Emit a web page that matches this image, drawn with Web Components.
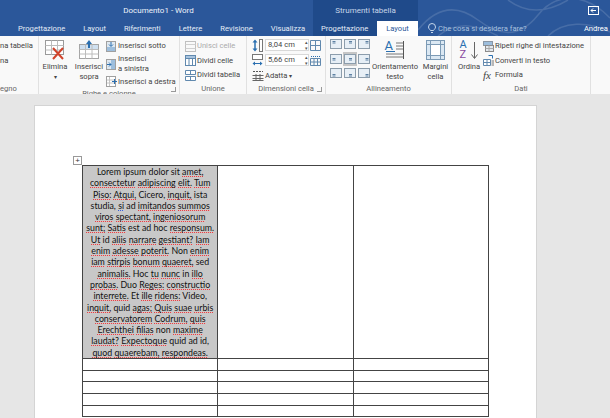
<!DOCTYPE html>
<html lang="it">
<head>
<meta charset="utf-8">
<title>Documento1 - Word</title>
<style>
  html, body { margin: 0; padding: 0; height: 100%; overflow: hidden; background: #e6e6e6; }
</style>
</head>
<body>
<wd-app>
  <wd-header></wd-header>
  <wd-ribbon></wd-ribbon>
  <wd-page>
    <wd-table>Lorem ipsum dolor sit <i>amet,</i><br>
<i>consectetur</i> <i>adipiscing</i> <i>elit.</i> <i>Tum</i><br>
<i>Piso:</i> <i>Atqui,</i> Cicero, <i>inquit,</i> ista<br>
studia, <b>si</b> ad <i>imitandos</i> <i>summos</i><br>
<i>viros</i> <i>spectant,</i> <i>ingeniosorum</i><br>
<i>sunt;</i> <i>Satis</i> est ad hoc <i>responsum.</i><br>
<i>Ut</i> id <i>aliis</i> <i>narrare</i> <i>gestiant?</i> <i>Iam</i><br>
<i>enim</i> <i>adesse</i> <i>poterit.</i> Non <i>enim</i><br>
<i>iam</i> <i>stirpis</i> <i>bonum</i> <i>quaeret,</i> sed<br>
<i>animalis.</i> Hoc <i>tu</i> <i>nunc</i> in <i>illo</i><br>
<i>probas.</i> Duo <i>Reges:</i> <i>constructio</i><br>
<i>interrete.</i> Et <i>ille</i> <i>ridens:</i> Video,<br>
<i>inquit,</i> quid <i>agas;</i> <i>Quis</i> <i>suae</i> <i>urbis</i><br>
<i>conservatorem</i> <i>Codrum,</i> <i>quis</i><br>
<i>Erechthei</i> <i>filias</i> non <i>maxime</i><br>
<i>laudat?</i> <i>Expectoque</i> quid ad id,<br>
<i>quod</i> <i>quaerebam,</i> <i>respondeas.</i></wd-table>
  </wd-page>
</wd-app>

<script>
const icons = {
  del: `<svg width="20" height="20" viewBox="0 0 20 20"><rect x=".5" y=".5" width="18" height="14" fill="#fff" stroke="#9a9a9a"/><path d="M.5 5.500h18M.5 10h18M6.500.5v14M12.500.5v14" stroke="#bcbcbc" fill="none"/><path d="M8 8l10 11M18 8L8 19" stroke="#d0432b" stroke-width="2"/></svg>`,
  above: `<svg width="20" height="19" viewBox="0 0 20 19"><rect x=".5" y="4.500" width="19" height="14" fill="#fff" stroke="#a5a5a5"/><rect x="1" y="5" width="18" height="4" fill="#cfe0f0"/><path d="M.5 9.500h19M.5 14h19M6.500 4.500v14M13 4.500v14" stroke="#bcbcbc" fill="none"/><path d="M10 8V3" stroke="#2a6fb0" stroke-width="2"/><path d="M7 4l3-4 3 4z" fill="#2a6fb0"/></svg>`,
  below: `<svg width="10" height="11" viewBox="0 0 10 11"><rect x=".5" y=".5" width="9" height="10" fill="#dfe8f0" stroke="#a0a0a0"/><rect x="1" y="6" width="8" height="4" fill="#9dbedd"/><path d="M5 1v4M3 3.500l2 2 2-2" stroke="#2a6fb0" fill="none"/></svg>`,
  left: `<svg width="10" height="11" viewBox="0 0 10 11"><rect x=".5" y=".5" width="9" height="10" fill="#dfe8f0" stroke="#a0a0a0"/><rect x="5" y="1" width="4" height="9" fill="#9dbedd"/><path d="M1 5.500h4M3 3.500l2 2-2 2" stroke="#2a6fb0" fill="none"/></svg>`,
  right: `<svg width="11" height="11" viewBox="0 0 11 11"><rect x=".5" y=".5" width="9" height="10" fill="#fff" stroke="#a0a0a0"/><path d="M3.500 1v9M1 4h8M1 7h8" stroke="#c4c4c4"/><path d="M6 5.500h5M8.500 3v5" stroke="#2a6fb0"/></svg>`,
  merge: `<svg width="11" height="11" viewBox="0 0 11 11"><rect x=".5" y=".5" width="10" height="10" fill="none" stroke="#c0c0c0"/><path d="M.5 3.500h10M.5 7.500h10" stroke="#d0d0d0"/></svg>`,
  split: `<svg width="11" height="11" viewBox="0 0 11 11"><rect x=".5" y=".5" width="10" height="10" fill="#fff" stroke="#6189ae"/><rect x="1" y="1" width="9" height="2.500" fill="#a9c4de"/><path d="M.5 3.500h10M4 3.500v7M7.500 3.500v7" stroke="#6189ae"/></svg>`,
  splitt: `<svg width="11" height="11" viewBox="0 0 11 11"><path d="M.5 4.500v-4h10v4zM.5 6.500h10v4h-10zM5.500.5v4M5.500 6.500v4" fill="#fff" stroke="#6189ae"/></svg>`,
  height: `<svg width="11" height="13" viewBox="0 0 11 13"><path d="M3 2v9" stroke="#2a6fb0" stroke-width="1.500"/><path d="M.5 3.500L3 .5l2.500 3zM.5 9.500L3 12.500l2.500-3z" fill="#2a6fb0"/><rect x="7.500" y=".5" width="3" height="12" fill="#fff" stroke="#777"/></svg>`,
  width: `<svg width="11" height="12" viewBox="0 0 11 12"><rect x=".5" y=".5" width="10" height="5" fill="#fff" stroke="#777"/><path d="M2 9.500h7" stroke="#2a6fb0"/><path d="M3 7.500L.5 9.500 3 11.500zM8 7.500l2.500 2L8 11.500z" fill="#2a6fb0"/></svg>`,
  fit: `<svg width="12" height="12" viewBox="0 0 12 12"><path d="M1 2.500h10" stroke="#555" stroke-dasharray="2 1"/><path d="M.5 6.500h11M.5 9.500h11M.5 11.500h11M4 5v7M8 5v7" fill="none" stroke="#666"/></svg>`,
  rows: `<svg width="11" height="11" viewBox="0 0 11 11"><path d="M.5.5h10v10H.5zM.5 5.500h10M5.500.5v10" fill="none" stroke="#6189ae"/></svg>`,
  cols: `<svg width="11" height="11" viewBox="0 0 11 11"><path d="M.5 3.500h10v7H.5zM.5 7h10M4 3.500v7M7.500 3.500v7" fill="none" stroke="#6189ae"/><path d="M1 1.500h9" stroke="#2a6fb0" stroke-dasharray="1 1"/></svg>`,
  margins: `<svg width="19" height="20" viewBox="0 0 19 20"><rect x=".5" y=".5" width="18" height="19" fill="#dbe8f3" stroke="#7c9ab5"/><rect x="4.500" y="4.500" width="10" height="11" fill="#fff" stroke="#7c9ab5"/><path d="M4.500.5v19M14.500.5v19M.5 4.500h18M.5 15.500h18" stroke="#7c9ab5" fill="none"/></svg>`,
  sort: `<svg width="19" height="22" viewBox="0 0 19 22"><path d="M14.500 2v16M11.500 14.500l3 4 3-4" fill="none" stroke="#666"/></svg>`,
  repeat: `<svg width="11" height="11" viewBox="0 0 11 11"><rect x=".5" y=".5" width="9" height="4" fill="#9dbedd" stroke="#8a97a5"/><rect x="2.500" y="4.500" width="8" height="6" fill="#e3e9ef" stroke="#8a8a8a"/><path d="M2.500 7.500h8M6 4.500v6" stroke="#aaa"/></svg>`,
  convert: `<svg width="11" height="11" viewBox="0 0 11 11"><path d="M.5 4.500h7v6h-7zM.5 7.500h7M4 4.500v6" fill="#fff" stroke="#6189ae"/><path d="M5.500.5h4v3" fill="none" stroke="#2a6fb0"/><path d="M8.500 6h2.500M8.500 8h2.500M8.500 10h2.500" stroke="#777"/></svg>`
};

function alignIcon(col, row) {
  // box with a few text lines placed by cell alignment
  const x = 2.5 + col * 2.5;
  const y = 2.500 + row * 2;
  return `<svg width="12" height="10" viewBox="0 0 12 10"><rect x=".5" y=".5" width="11" height="9" fill="#e7eff6" stroke="#8c9dac"/><path d="M${x} ${y}h3M${x} ${y + 1.500}h3" stroke="#5d80a2"/></svg>`;
}

class WdApp extends HTMLElement {
  constructor() {
    super();
    this.attachShadow({ mode: 'open' }).innerHTML = `
    <style>
      :host {
        display: flex;
        flex-direction: column;
        width: 610px;
        height: 418px;
        overflow: hidden;
        font-family: Roboto, "Liberation Sans", sans-serif;
        font-size: 7.600px;
        color: #444;
      }
    </style>
    <slot></slot>`;
  }
}

class WdHeader extends HTMLElement {
  constructor() {
    super();
    this.attachShadow({ mode: 'open' }).innerHTML = `
    <style>
      :host {
        display: flex;
        height: 36px;
        flex: none;
        background: #2b579a;
        color: #fff;
      }
      .main { width: 313px; display: flex; flex-direction: column; }
      .title { height: 21px; display: flex; align-items: center; justify-content: center; padding-left: 4px; color: #eef3fa; font-size: 8px; }
      .tabs { display: flex; gap: 18px; padding: 3px 0 0 18px; color: #e4ecf6; white-space: nowrap; }
      .ctx { width: 105px; background: #1f4a8a; display: flex; flex-direction: column; }
      .ctx .title { color: #c6d5e8; padding-left: 0; }
      .ctx .tabs { gap: 10px; padding: 0 0 0 8px; flex: 1; align-items: stretch; }
      .ctx span { padding-top: 3px; width: 46px; }
      .ctx .on { background: #fff; color: #2b579a; width: 41px; text-align: center; box-sizing: border-box; }
      .rest { flex: 1; display: flex; flex-direction: column; position: relative; overflow: hidden; }
      .rest .swirl { position: absolute; inset: 0; opacity: .13; }
      .win { height: 21px; display: flex; align-items: center; justify-content: flex-end; padding-right: 11px; position: relative; }
      .tell { display: flex; justify-content: space-between; padding: 3px 2px 0 10px; position: relative; white-space: nowrap; }
      .tell span:first-child { display: flex; align-items: center; gap: 2px; color: #a9c1df; height: 9px; }
    </style>
    <div class="main">
      <div class="title">Documento1 - Word</div>
      <div class="tabs"><span>Progettazione</span><span>Layout</span><span>Riferimenti</span><span>Lettere</span><span>Revisione</span><span>Visualizza</span></div>
    </div>
    <div class="ctx">
      <div class="title">Strumenti tabella</div>
      <div class="tabs"><span>Progettazione</span><span class="on">Layout</span></div>
    </div>
    <div class="rest">
      <svg class="swirl" viewBox="0 0 192 36" preserveAspectRatio="none"><path d="M0 30C20 5 40 5 60 20S100 40 120 15 170-5 192 18M20 36C40 20 60 25 80 36M90 0c20 15 40 12 60 0M130 36c15-15 40-15 62-4" fill="none" stroke="#fff" stroke-width="1.500"/></svg>
      <div class="win"><svg width="11" height="9" viewBox="0 0 11 9"><rect x=".5" y=".5" width="10" height="8" fill="none" stroke="#fff"/><path d="M3 4.500h5M3 4.500l2-2M3 4.500l2 2" stroke="#fff"/></svg></div>
      <div class="tell">
        <span><svg width="8" height="11" viewBox="0 0 8 11"><path d="M2.500 7.500C1.500 6 .5 5.500.5 4a3.500 3.500 0 0 1 7 0c0 1.500-1 2-2 3.500zM3 9.500h2" fill="none" stroke="#c5d6ea"/></svg>Che cosa si desidera fare?</span>
        <span>Andrea</span>
      </div>
    </div>`;
  }
}

// one ribbon group: slotted content, label at the bottom, optional dialog launcher
class RbGroup extends HTMLElement {
  constructor() {
    super();
    this.attachShadow({ mode: 'open' }).innerHTML = `
    <style>
      :host {
        display: flex;
        flex-direction: column;
        flex: none;
        box-sizing: border-box;
        height: 58px;
        border-right: 1px solid #e1e1e1;
        position: relative;
        overflow: hidden;
      }
      .body { display: flex; height: 47px; flex: none; }
      .label { text-align: var(--label-align, center); padding-top: var(--label-shift, 0); color: #666; line-height: 11px; white-space: nowrap; }
      .launch { position: absolute; right: 3px; bottom: 2px; width: 4px; height: 4px; border: 1px solid #999; border-width: 0 1px 1px 0; }
    </style>
    <div class="body"><slot></slot></div>
    <div class="label"></div>`;
  }

  connectedCallback() {
    this.shadowRoot.querySelector('.label').textContent = this.getAttribute('label');
    if (this.hasAttribute('launch')) {
      const launch = document.createElement('div');
      launch.className = 'launch';
      this.shadowRoot.append(launch);
    }
  }
}

class RbBig extends HTMLElement {
  constructor() {
    super();
    this.attachShadow({ mode: 'open' }).innerHTML = `
    <style>
      :host {
        display: flex;
        flex-direction: column;
        align-items: center;
        flex: none;
        padding-top: 4px;
        line-height: 10.500px;
        text-align: center;
        white-space: nowrap;
      }
      .icon { height: 21.500px; display: flex; align-items: flex-start; }
      ::slotted([slot="icon"]) { display: block; line-height: 0; }
    </style>
    <div class="icon"><slot name="icon"></slot></div>
    <div><slot></slot></div>`;
  }
}

class RbSmall extends HTMLElement {
  constructor() {
    super();
    this.attachShadow({ mode: 'open' }).innerHTML = `
    <style>
      :host {
        display: flex;
        align-items: center;
        gap: 1px;
        white-space: nowrap;
        line-height: 10.500px;
      }
      .icon { display: flex; width: 11px; height: 10.500px; align-items: center; flex: none; }
      ::slotted([slot="icon"]) { display: block; line-height: 0; }
    </style>
    <span class="icon"><slot name="icon"></slot></span>
    <span><slot></slot></span>`;
  }
}

class WdRibbon extends HTMLElement {
  constructor() {
    super();
    this.attachShadow({ mode: 'open' }).innerHTML = `
    <style>
      :host {
        display: flex;
        flex: none;
        height: 58px;
        background: #f9f9f9;
        box-sizing: border-box;
        overflow: hidden;
      }
      svg { display: block; }
      .col { display: flex; flex-direction: column; padding-top: 5px; gap: 4px; }
      .first { display: flex; flex-direction: column; gap: 4px; padding-top: 5px; white-space: nowrap; line-height: 10.500px; }
      .gray { color: #aaa; }
      .spin { display: flex; align-items: center; gap: 2px; height: 12px; }
      .input { width: 44px; height: 12px; line-height: 10px; box-sizing: border-box; padding-left: 2px; border: 1px solid #d8d8d8; position: relative; background: #fff; }
      .input::after { content: "\\25B4\\A\\25BE"; white-space: pre; position: absolute; right: 0; top: -1px; font-size: 5px; line-height: 6px; color: #555; }
      .side { display: flex; flex-direction: column; gap: 4px; padding: 4px 0 0 1px; }
      .grid { display: grid; grid-template-columns: repeat(3, 14px); grid-auto-rows: 14.500px; padding-top: 1px; place-items: center; margin-left: 3px; }
      .grid .sel { background: #c6c6c6; width: 14px; height: 14.500px; display: flex; align-items: center; justify-content: center; }
      .orient { position: relative; width: 21px; height: 20px; }
      .orient b { position: absolute; left: 0; top: -2px; font: 400 13px/15px Roboto, sans-serif; color: #2a6fb0; }
      .orient svg { position: absolute; left: 0; top: 0; }
      .sort { position: relative; width: 19px; height: 20px; }
      .sort b { position: absolute; left: 0; font: 400 11px/10px Roboto, sans-serif; }
      .sort svg { position: absolute; left: 0; top: 0; }
      .fx { font: italic 11px/10px "Liberation Serif", serif; color: #444; }
      .caret { font-size: 6px; }
    </style>
    <rb-group label="egno" style="width:39px;--label-align:left">
      <div class="first"><span>na tabella</span><span>na</span></div>
    </rb-group>

    <rb-group label="Righe e colonne" launch style="width:141px;--label-shift:5px">
      <rb-big style="width:34px;margin-left:-1px"><span slot="icon">${icons.del}</span>Elimina<br><span class="caret">▾</span></rb-big>
      <rb-big style="width:34px"><span slot="icon">${icons.above}</span>Inserisci<br>sopra</rb-big>
      <div class="col" style="gap:2px">
        <rb-small><span slot="icon">${icons.below}</span>Inserisci sotto</rb-small>
        <rb-small><span slot="icon">${icons.left}</span>Inserisci<br>a sinistra</rb-small>
        <rb-small><span slot="icon">${icons.right}</span>Inserisci a destra</rb-small>
      </div>
    </rb-group>

    <rb-group label="Unione" style="width:67px">
      <div class="col" style="padding-left:5px">
        <rb-small class="gray"><span slot="icon">${icons.merge}</span>Unisci celle</rb-small>
        <rb-small><span slot="icon">${icons.split}</span>Dividi celle</rb-small>
        <rb-small><span slot="icon">${icons.splitt}</span>Dividi tabella</rb-small>
      </div>
    </rb-group>

    <rb-group label="Dimensioni cella" launch style="width:79px">
      <div class="col" style="padding:3px 0 0 5px;gap:3px">
        <div class="spin">${icons.height}<div class="input">8,04 cm</div></div>
        <div class="spin">${icons.width}<div class="input">5,66 cm</div></div>
        <div class="spin" style="gap:1px">${icons.fit}<span>Adatta <span class="caret">▾</span></span></div>
      </div>
      <div class="side">${icons.rows}${icons.cols}</div>
    </rb-group>

    <rb-group label="Allineamento" style="width:126px">
      <div class="grid">
        ${alignIcon(0, 0)}${alignIcon(1, 0)}${alignIcon(2, 0)}
        ${alignIcon(0, 1)}<div class="sel">${alignIcon(1, 1)}</div>${alignIcon(2, 1)}
        ${alignIcon(0, 2)}${alignIcon(1, 2)}${alignIcon(2, 2)}
      </div>
      <rb-big style="width:48px">
        <span slot="icon" class="orient"><b>A</b><svg width="21" height="20" viewBox="0 0 21 20"><path d="M1 11.500h9" stroke="#2a6fb0" fill="none"/><path d="M11 3h8M11 6h8M11 9h8M1 14h18M1 17h18" fill="none" stroke="#777"/><path d="M18.500 1v18" stroke="#555" fill="none"/></svg></span>Orientamento<br>testo</rb-big>
      <rb-big style="width:31px;margin-left:1px"><span slot="icon">${icons.margins}</span>Margini<br>cella</rb-big>
    </rb-group>

    <rb-group label="Dati" style="width:139px">
      <rb-big style="width:28px;margin-left:3px"><span slot="icon" class="sort"><b style="top:0;color:#2a6fb0">A</b><b style="top:10px;color:#8a4aa0">Z</b>${icons.sort}</span>Ordina</rb-big>
      <div class="col">
        <rb-small><span slot="icon">${icons.repeat}</span>Ripeti righe di intestazione</rb-small>
        <rb-small><span slot="icon">${icons.convert}</span>Converti in testo</rb-small>
        <rb-small><span slot="icon" class="fx">fx</span>Formula</rb-small>
      </div>
    </rb-group>`;
  }
}

class WdPage extends HTMLElement {
  constructor() {
    super();
    this.attachShadow({ mode: 'open' }).innerHTML = `
    <style>
      :host {
        display: block;
        flex: 1;
        min-height: 0;
        background: #e6e6e6;
        padding: 12px 74px 0 35px;
        overflow: hidden;
      }
      .sheet {
        background: #fff;
        outline: 1px solid #d4d4d4;
        height: 400px;
        padding: 59px 0 0 47px;
        box-sizing: border-box;
      }
    </style>
    <div class="sheet"><slot></slot></div>`;
  }
}

class WdTable extends HTMLElement {
  constructor() {
    super();
    this.attachShadow({ mode: 'open' }).innerHTML = `
    <style>
      :host { display: block; position: relative; }
      table { border-collapse: collapse; table-layout: fixed; width: 407px; }
      td { border: 1px solid #444; padding: 0; height: 10.700px; }
      .text {
        background: #c8c8c8;
        padding: 0;
        height: 192px;
        text-align: center;
        vertical-align: top;
        white-space: nowrap;
        font: 8.800px/11.300px Lato, "Liberation Sans", sans-serif;
        color: #111;
      }
      ::slotted(i), ::slotted(b) {
        font-style: normal;
        font-weight: 400;
        background: repeating-linear-gradient(90deg, #d8474a 0 1px, #efb0b0 1px 2px) 0 100% / 100% 1px no-repeat;
      }
      ::slotted(b) { background-image: repeating-linear-gradient(90deg, #4060c8 0 1px, #b0c0ef 1px 2px); }
      .handle { position: absolute; left: -9px; top: -9px; width: 7px; height: 7px; border: 1px solid #999; background: #fff; font: 8px/7px "Liberation Sans", sans-serif; text-align: center; color: #333; }
    </style>
    <div class="handle">+</div>
    <table>
      <tr><td class="text"><slot></slot></td><td></td><td></td></tr>
      <tr><td></td><td></td><td></td></tr>
      <tr><td></td><td></td><td></td></tr>
      <tr><td></td><td></td><td></td></tr>
      <tr><td></td><td></td><td></td></tr>
      <tr><td></td><td></td><td></td></tr>
    </table>`;
  }
}

customElements.define('wd-app', WdApp);
customElements.define('wd-header', WdHeader);
customElements.define('rb-group', RbGroup);
customElements.define('rb-big', RbBig);
customElements.define('rb-small', RbSmall);
customElements.define('wd-ribbon', WdRibbon);
customElements.define('wd-page', WdPage);
customElements.define('wd-table', WdTable);
</script>
</body>
</html>
